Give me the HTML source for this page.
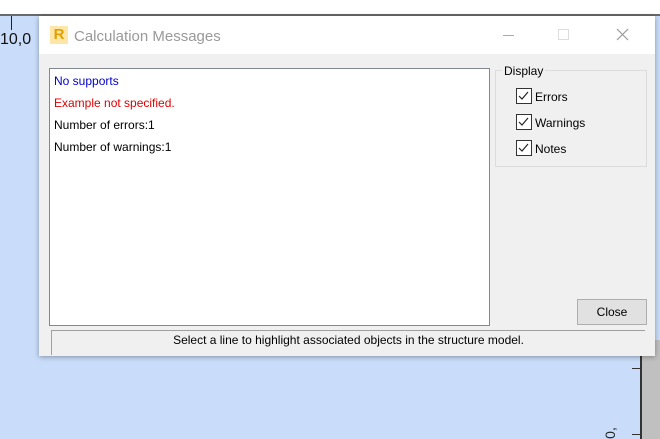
<!DOCTYPE html><html><head><style>
body{margin:0;width:660px;height:439px;position:relative;overflow:hidden;background:#c9ddfa;font-family:"Liberation Sans",sans-serif;font-size:12px}
.a{position:absolute}
</style></head><body>
<div class="a" style="left:0;top:0;width:660px;height:14px;background:#fff"></div>
<div class="a" style="left:0;top:14px;width:660px;height:2px;background:#6a6a6a"></div>
<div class="a" style="left:11px;top:16px;width:1px;height:14px;background:#222"></div>
<div class="a" style="left:0;top:31px;font-size:16px;color:#111">10,0</div>
<div class="a" style="left:641px;top:340px;width:19px;height:99px;background:#c0c0c0"></div>
<div class="a" style="left:640px;top:340px;width:2px;height:99px;background:#333"></div>
<div class="a" style="left:632px;top:368px;width:8px;height:1px;background:#333"></div>
<div class="a" style="left:632px;top:434px;width:8px;height:1px;background:#333"></div>
<div class="a" style="left:604px;top:425px;font-size:14px;transform:rotate(-90deg);color:#222">0,</div>
<div class="a" style="left:39px;top:16px;width:616px;height:340px;background:#f0f0f0;box-shadow:0 1px 5px rgba(0,0,0,.35)"></div>
<div class="a" style="left:39px;top:16px;width:616px;height:38px;background:#fff"></div>
<div class="a" style="left:50px;top:26px;width:18px;height:18px;background:#fde6a8;color:#e0a000;font-weight:bold;font-size:15px;line-height:18px;text-align:center">R</div>
<div class="a" style="left:74px;top:28px;font-size:15px;color:#999">Calculation Messages</div>
<div class="a" style="left:503px;top:35px;width:11px;height:1px;background:#aaa"></div>
<div class="a" style="left:558px;top:29px;width:9px;height:9px;border:1px solid #ddd"></div>
<svg class="a" style="left:616px;top:28px" width="13" height="13"><path d="M1 1L12 12M12 1L1 12" stroke="#999" stroke-width="1.2"/></svg>
<div class="a" style="left:49px;top:68px;width:439px;height:256px;background:#fff;border:1px solid #828790"></div>
<div class="a" style="left:54px;top:74px;color:#0000cc">No supports</div>
<div class="a" style="left:54px;top:96px;color:#d00">Example not specified.</div>
<div class="a" style="left:54px;top:118px;color:#000">Number of errors:1</div>
<div class="a" style="left:54px;top:140px;color:#000">Number of warnings:1</div>
<div class="a" style="left:495px;top:70px;width:150px;height:95px;border:1px solid #dcdcdc"></div>
<div class="a" style="left:502px;top:64px;background:#f0f0f0;padding:0 2px;color:#000">Display</div>
<div class="a" style="left:516px;top:88px;width:14px;height:14px;border:1px solid #333;background:#fff"></div>
<div class="a" style="left:516px;top:114px;width:14px;height:14px;border:1px solid #333;background:#fff"></div>
<div class="a" style="left:516px;top:140px;width:14px;height:14px;border:1px solid #333;background:#fff"></div>
<svg class="a" style="left:516px;top:88px" width="16" height="70"><g fill="none" stroke="#222" stroke-width="1.2"><path d="M3 8L6 11L12 4"/><path d="M3 34L6 37L12 30"/><path d="M3 60L6 63L12 56"/></g></svg>
<div class="a" style="left:535px;top:90px">Errors</div>
<div class="a" style="left:535px;top:116px">Warnings</div>
<div class="a" style="left:535px;top:142px">Notes</div>
<div class="a" style="left:577px;top:299px;width:68px;height:24px;background:#e1e1e1;border:1px solid #adadad;text-align:center;line-height:25px">Close</div>
<div class="a" style="left:51px;top:330px;width:593px;height:24px;border-top:1px solid #a0a0a0;border-left:1px solid #a0a0a0;text-align:center;line-height:19px">Select a line to highlight associated objects in the structure model.</div>
</body></html>
